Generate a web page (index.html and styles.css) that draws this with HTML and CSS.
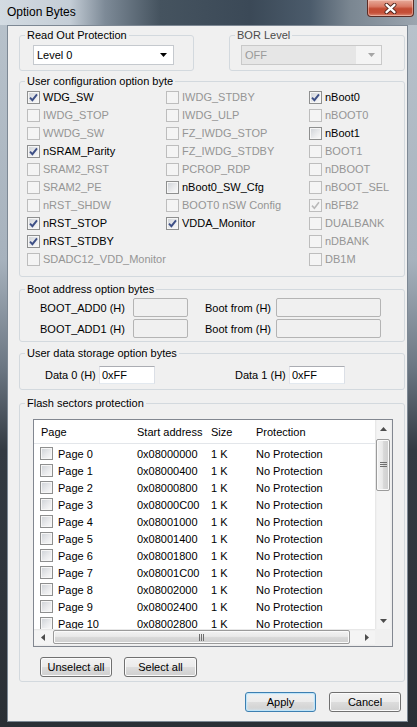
FILE: index.html
```html
<!DOCTYPE html>
<html>
<head>
<meta charset="utf-8">
<title>Option Bytes</title>
<link rel="stylesheet" href="styles.css">
</head>
<body>
<div class="window">
  <div class="titlebar">
    <span class="title">Option Bytes</span>
    <div class="close">
      <svg width="15" height="11" viewBox="0 0 15 11"><path d="M3.5 1.8 L11.5 9.2 M11.5 1.8 L3.5 9.2" stroke="#4a2019" stroke-width="4" stroke-linecap="round"/><path d="M3.5 1.8 L11.5 9.2 M11.5 1.8 L3.5 9.2" stroke="#fff" stroke-width="2.3" stroke-linecap="round"/></svg>
    </div>
  </div>
  <div class="client">
    <div class="toprow">
      <fieldset class="group g-rop">
        <legend>Read Out Protection</legend>
        <div class="gbody">
          <div class="combo"><span class="combo-text">Level 0</span><svg class="arrow" width="7" height="4" viewBox="0 0 7 4"><polygon points="0,0 7,0 3.5,4" fill="#000"/></svg></div>
        </div>
      </fieldset>
      <fieldset class="group g-bor">
        <legend class="dis-text">BOR Level</legend>
        <div class="gbody">
          <div class="combo combo-dis"><span class="combo-text">OFF</span><svg class="arrow" width="7" height="4" viewBox="0 0 7 4"><polygon points="0,0 7,0 3.5,4" fill="#a5a5a5"/></svg></div>
        </div>
      </fieldset>
    </div>

    <fieldset class="group g-user">
      <legend>User configuration option byte</legend>
      <div class="gbody cols">
        <div class="col col1">
          <label class="chk"><span class="cb"><svg width="9" height="9" viewBox="0 0 9 9"><path d="M1 4.6 L3.4 7.2 L8 1.3" fill="none" stroke="#3d4f86" stroke-width="1.9"/></svg></span>WDG_SW</label>
          <label class="chk dis"><span class="cb"></span>IWDG_STOP</label>
          <label class="chk dis"><span class="cb"></span>WWDG_SW</label>
          <label class="chk"><span class="cb"><svg width="9" height="9" viewBox="0 0 9 9"><path d="M1 4.6 L3.4 7.2 L8 1.3" fill="none" stroke="#3d4f86" stroke-width="1.9"/></svg></span>nSRAM_Parity</label>
          <label class="chk dis"><span class="cb"></span>SRAM2_RST</label>
          <label class="chk dis"><span class="cb"></span>SRAM2_PE</label>
          <label class="chk dis"><span class="cb"></span>nRST_SHDW</label>
          <label class="chk"><span class="cb"><svg width="9" height="9" viewBox="0 0 9 9"><path d="M1 4.6 L3.4 7.2 L8 1.3" fill="none" stroke="#3d4f86" stroke-width="1.9"/></svg></span>nRST_STOP</label>
          <label class="chk"><span class="cb"><svg width="9" height="9" viewBox="0 0 9 9"><path d="M1 4.6 L3.4 7.2 L8 1.3" fill="none" stroke="#3d4f86" stroke-width="1.9"/></svg></span>nRST_STDBY</label>
          <label class="chk dis"><span class="cb"></span>SDADC12_VDD_Monitor</label>
        </div>
        <div class="col col2">
          <label class="chk dis"><span class="cb"></span>IWDG_STDBY</label>
          <label class="chk dis"><span class="cb"></span>IWDG_ULP</label>
          <label class="chk dis"><span class="cb"></span>FZ_IWDG_STOP</label>
          <label class="chk dis"><span class="cb"></span>FZ_IWDG_STDBY</label>
          <label class="chk dis"><span class="cb"></span>PCROP_RDP</label>
          <label class="chk"><span class="cb"></span>nBoot0_SW_Cfg</label>
          <label class="chk dis"><span class="cb"></span>BOOT0 nSW Config</label>
          <label class="chk"><span class="cb"><svg width="9" height="9" viewBox="0 0 9 9"><path d="M1 4.6 L3.4 7.2 L8 1.3" fill="none" stroke="#3d4f86" stroke-width="1.9"/></svg></span>VDDA_Monitor</label>
        </div>
        <div class="col col3">
          <label class="chk"><span class="cb"><svg width="9" height="9" viewBox="0 0 9 9"><path d="M1 4.6 L3.4 7.2 L8 1.3" fill="none" stroke="#3d4f86" stroke-width="1.9"/></svg></span>nBoot0</label>
          <label class="chk dis"><span class="cb"></span>nBOOT0</label>
          <label class="chk"><span class="cb"></span>nBoot1</label>
          <label class="chk dis"><span class="cb"></span>BOOT1</label>
          <label class="chk dis"><span class="cb"></span>nDBOOT</label>
          <label class="chk dis"><span class="cb"></span>nBOOT_SEL</label>
          <label class="chk dis"><span class="cb"><svg width="9" height="9" viewBox="0 0 9 9"><path d="M1 4.6 L3.4 7.2 L8 1.3" fill="none" stroke="#b9b9b9" stroke-width="1.6"/></svg></span>nBFB2</label>
          <label class="chk dis"><span class="cb"></span>DUALBANK</label>
          <label class="chk dis"><span class="cb"></span>nDBANK</label>
          <label class="chk dis"><span class="cb"></span>DB1M</label>
        </div>
      </div>
    </fieldset>

    <fieldset class="group g-boot">
      <legend>Boot address option bytes</legend>
      <div class="gbody">
        <div class="brow">
          <span class="blabel">BOOT_ADD0 (H)</span><span class="tb tb-dis tb-add"></span>
          <span class="blabel2">Boot from (H)</span><span class="tb tb-dis tb-from"></span>
        </div>
        <div class="brow">
          <span class="blabel">BOOT_ADD1 (H)</span><span class="tb tb-dis tb-add"></span>
          <span class="blabel2">Boot from (H)</span><span class="tb tb-dis tb-from"></span>
        </div>
      </div>
    </fieldset>

    <fieldset class="group g-data">
      <legend>User data storage option bytes</legend>
      <div class="gbody drow">
        <span class="dlabel">Data 0 (H)</span><span class="tb tb-data">0xFF</span>
        <span class="dlabel dlabel2">Data 1 (H)</span><span class="tb tb-data">0xFF</span>
      </div>
    </fieldset>

    <fieldset class="group g-flash">
      <legend>Flash sectors protection</legend>
      <div class="gbody">
        <div class="listview">
          <div class="lv-main">
            <div class="lv-header lv-cols">
              <span>Page</span><span>Start address</span><span>Size</span><span>Protection</span>
            </div>
            <div class="lv-rows">
              <div class="lv-row lv-cols"><span class="pg"><span class="cb"></span>Page 0</span><span>0x08000000</span><span>1 K</span><span>No Protection</span></div>
              <div class="lv-row lv-cols"><span class="pg"><span class="cb"></span>Page 1</span><span>0x08000400</span><span>1 K</span><span>No Protection</span></div>
              <div class="lv-row lv-cols"><span class="pg"><span class="cb"></span>Page 2</span><span>0x08000800</span><span>1 K</span><span>No Protection</span></div>
              <div class="lv-row lv-cols"><span class="pg"><span class="cb"></span>Page 3</span><span>0x08000C00</span><span>1 K</span><span>No Protection</span></div>
              <div class="lv-row lv-cols"><span class="pg"><span class="cb"></span>Page 4</span><span>0x08001000</span><span>1 K</span><span>No Protection</span></div>
              <div class="lv-row lv-cols"><span class="pg"><span class="cb"></span>Page 5</span><span>0x08001400</span><span>1 K</span><span>No Protection</span></div>
              <div class="lv-row lv-cols"><span class="pg"><span class="cb"></span>Page 6</span><span>0x08001800</span><span>1 K</span><span>No Protection</span></div>
              <div class="lv-row lv-cols"><span class="pg"><span class="cb"></span>Page 7</span><span>0x08001C00</span><span>1 K</span><span>No Protection</span></div>
              <div class="lv-row lv-cols"><span class="pg"><span class="cb"></span>Page 8</span><span>0x08002000</span><span>1 K</span><span>No Protection</span></div>
              <div class="lv-row lv-cols"><span class="pg"><span class="cb"></span>Page 9</span><span>0x08002400</span><span>1 K</span><span>No Protection</span></div>
              <div class="lv-row lv-cols"><span class="pg"><span class="cb"></span>Page 10</span><span>0x08002800</span><span>1 K</span><span>No Protection</span></div>
            </div>
          </div>
          <div class="vscroll">
            <div class="sb-btn"><svg width="7" height="4" viewBox="0 0 7 4"><polygon points="3.5,0 7,4 0,4" fill="#4d4d4d"/></svg></div>
            <div class="vthumb"><svg width="7" height="6" viewBox="0 0 7 6"><path d="M0 0.5 H7 M0 2.5 H7 M0 4.5 H7" stroke="#6f6f6f" stroke-width="1"/></svg></div>
            <div class="sb-btn sb-end"><svg width="7" height="4" viewBox="0 0 7 4"><polygon points="0,0 7,0 3.5,4" fill="#4d4d4d"/></svg></div>
          </div>
          <div class="hscroll">
            <div class="sb-btn"><svg width="4" height="7" viewBox="0 0 4 7"><polygon points="4,0 4,7 0,3.5" fill="#4d4d4d"/></svg></div>
            <div class="hthumb"><svg width="6" height="7" viewBox="0 0 6 7"><path d="M0.5 0 V7 M2.5 0 V7 M4.5 0 V7" stroke="#6f6f6f" stroke-width="1"/></svg></div>
            <div class="sb-btn sb-end"><svg width="4" height="7" viewBox="0 0 4 7"><polygon points="0,0 4,3.5 0,7" fill="#4d4d4d"/></svg></div>
          </div>
          <div class="corner"></div>
        </div>
        <div class="flash-buttons">
          <button class="btn btn-unsel" type="button">Unselect all</button>
          <button class="btn btn-sel" type="button">Select all</button>
        </div>
      </div>
    </fieldset>

    <div class="dialog-buttons">
      <button class="btn btn-apply" type="button">Apply</button>
      <button class="btn btn-cancel" type="button">Cancel</button>
    </div>
  </div>
</div>
</body>
</html>
```

FILE: styles.css
```css
* { box-sizing: border-box; }
html, body { margin: 0; padding: 0; }
body {
  width: 417px;
  height: 727px;
  overflow: hidden;
  font-family: "Liberation Sans", Arial, sans-serif;
  font-size: 11px;
  color: #000;
  background: #2b3037;
}

.window {
  width: 417px;
  height: 727px;
  display: flex;
  flex-direction: column;
  background: linear-gradient(to bottom, #b9c3cc 0, #a7b2bd 260px, #6a7581 370px, #333a42 450px, #2a2f35 727px);
}

/* title bar */
.titlebar {
  height: 25px;
  flex: none;
  display: flex;
  justify-content: space-between;
  align-items: flex-start;
  background: linear-gradient(to right, #d3dbe2 0, #c4cdd6 70px, #7d8a97 105px, #45535f 160px, #3b4957 250px, #4b5b6b 310px, #7a8691 350px, #9ba5af 417px);
}
.title {
  padding-left: 7px;
  line-height: 25px;
  font-size: 12px;
  color: #000;
}
.close {
  width: 47px;
  height: 17px;
  margin-right: 3px;
  border: 1px solid #5b2c25;
  border-top: none;
  border-radius: 0 0 4px 4px;
  background: linear-gradient(to bottom, #e7aa9a 0, #d97a66 40%, #c24b33 55%, #c55039 80%, #dc8c76 100%);
  box-shadow: inset 0 0 0 1px rgba(255, 220, 210, 0.45);
  display: flex;
  align-items: center;
  justify-content: center;
}

/* client area */
.client {
  flex: 1;
  margin: 0 9px 5px 7px;
  background: #f0f0f0;
  border: 1px solid #7d8894;
  padding: 0 2px 0 11px;
  display: flex;
  flex-direction: column;
}

.group {
  margin: 0;
  padding: 0;
  min-width: 0;
  border: 1px solid #d3d9de;
  border-radius: 3px;
}
.group legend {
  padding: 0 2px;
  margin-left: 5px;
  line-height: 13px;
  font-size: 11px;
}
.dis-text { color: #4a4a4a; }

.toprow {
  display: flex;
  justify-content: space-between;
  margin-top: 3px;
}
.g-rop { width: 175px; }
.g-bor { width: 176px; }
.g-rop .gbody { padding: 3px 0 5px 13px; }
.g-bor .gbody { padding: 3px 0 5px 11px; }

.combo {
  width: 141px;
  height: 20px;
  background: #fff;
  border: 1px solid #c5c9ce;
  display: flex;
  align-items: center;
  justify-content: space-between;
  padding: 0 6px 0 3px;
}
.combo-dis {
  background: linear-gradient(to right, #e6e6e6 0, #e6e6e6 114px, #f4f4f4 114px);
  border-color: #c9c9c9;
  color: #9a9a9a;
}

/* user config */
.g-user { margin-top: 4px; }
.cols {
  display: flex;
  padding: 0 0 8px 7px;
}
.col { display: flex; flex-direction: column; }
.col1 { width: 139px; }
.col2 { width: 143px; }
.col3 { flex: 1; }
.chk {
  height: 18px;
  display: flex;
  align-items: center;
  gap: 3px;
  white-space: nowrap;
}
.chk.dis { color: #959595; }

.cb {
  width: 13px;
  height: 13px;
  flex: none;
  border: 1px solid #8e8f8f;
  background: linear-gradient(135deg, #cdd1d6 0, #e9eaec 55%, #fbfbfb 100%);
  box-shadow: inset 0 0 0 1px #f6f6f6;
  display: flex;
  align-items: center;
  justify-content: center;
}
.chk .cb svg { display: block; }
.chk.dis .cb {
  border-color: #bdbdbd;
  background: #f4f4f4;
  box-shadow: none;
}

/* boot address */
.g-boot { margin-top: 6px; }
.g-boot .gbody { padding: 2px 0 3px 20px; display: flex; flex-direction: column; gap: 2px; }
.brow { display: flex; align-items: center; height: 19px; }
.blabel { width: 93px; }
.blabel2 { width: 71px; margin-left: 17px; }

.tb {
  height: 19px;
  background: #fff;
  border: 1px solid;
  border-color: #abadb3 #dbdfe6 #e3e9ef #e2e3ea;
  padding-left: 2px;
  line-height: 17px;
  display: block;
}
.tb-dis {
  background: #f0f0f0;
  border-color: #b4b4b4;
  border-radius: 2px;
}
.tb-add { width: 55px; }
.tb-from { width: 105px; }

/* user data */
.g-data { margin-top: 5px; }
.drow {
  display: flex;
  align-items: center;
  padding: 6px 0 5px 25px;
}
.dlabel { width: 54px; }
.dlabel2 { margin-left: 80px; }
.tb-data { width: 56px; height: 18px; line-height: 16px; }

/* flash */
.g-flash { margin-top: 7px; }
.g-flash .gbody { padding: 9px 0 4px 13px; }

.listview {
  width: 360px;
  height: 228px;
  border: 1px solid #828790;
  background: #fff;
  display: grid;
  grid-template-columns: 1fr 17px;
  grid-template-rows: 1fr 17px;
}
.lv-main { overflow: hidden; }
.lv-cols {
  display: grid;
  grid-template-columns: 96px 74px 45px 1fr;
  white-space: nowrap;
}
.lv-cols > span { padding-left: 7px; }
.lv-header {
  height: 24px;
  align-items: center;
  border-bottom: 1px solid #e3e6ea;
}
.lv-rows { padding-top: 1px; }
.lv-row { height: 17px; align-items: center; }
.lv-row .pg {
  padding-left: 6px;
  display: flex;
  align-items: center;
  gap: 5px;
}

.vscroll {
  display: flex;
  flex-direction: column;
  background: linear-gradient(to right, #e4e4e4 0, #f4f4f4 2px, #f4f4f4 15px, #e9e9e9 17px);
}
.hscroll {
  display: flex;
  align-items: flex-start;
  background: linear-gradient(to bottom, #e4e4e4 0, #f4f4f4 2px, #f4f4f4 15px, #e9e9e9 17px);
}
.corner { background: #f0f0f0; }
.sb-btn {
  width: 17px;
  height: 17px;
  flex: none;
  display: flex;
  align-items: center;
  justify-content: center;
}
.sb-end { margin-top: auto; }
.hscroll .sb-end { margin-top: 0; margin-left: auto; }
.vthumb {
  width: 14px;
  height: 52px;
  margin: 2px 2px 0 1px;
  border: 1px solid #9b9b9b;
  border-radius: 2px;
  background: linear-gradient(to right, #f3f3f3 0, #e9e9e9 45%, #d8d8d8 55%, #cfcfcf 100%);
  box-shadow: inset 0 0 0 1px #fafafa;
  display: flex;
  align-items: center;
  justify-content: center;
}
.hthumb {
  width: 297px;
  height: 14px;
  margin: 1px 0 0 2px;
  border: 1px solid #9b9b9b;
  border-radius: 2px;
  background: linear-gradient(to bottom, #f3f3f3 0, #e9e9e9 45%, #d8d8d8 55%, #cfcfcf 100%);
  box-shadow: inset 0 0 0 1px #fafafa;
  display: flex;
  align-items: center;
  justify-content: center;
}

.flash-buttons {
  display: flex;
  gap: 12px;
  margin-top: 10px;
  padding-left: 7px;
}

.btn {
  height: 20px;
  padding: 0;
  border: 1px solid #707070;
  border-radius: 3px;
  background: linear-gradient(to bottom, #f2f2f2 0, #ebebeb 50%, #dddddd 50%, #cfcfcf 100%);
  box-shadow: inset 0 0 0 1px #fbfbfb;
  font-family: "Liberation Sans", Arial, sans-serif;
  font-size: 11px;
  color: #000;
  display: flex;
  align-items: center;
  justify-content: center;
}
.btn-unsel { width: 72px; }
.btn-sel { width: 73px; }

.dialog-buttons {
  display: flex;
  justify-content: flex-end;
  gap: 13px;
  margin-top: 10px;
  padding-right: 4px;
}
.btn-apply {
  width: 71px;
  border-color: #3c7fb1;
  box-shadow: inset 0 0 0 1px #bfe4f8, inset 0 0 3px 1px #d6eefb;
}
.btn-cancel { width: 72px; }
```
